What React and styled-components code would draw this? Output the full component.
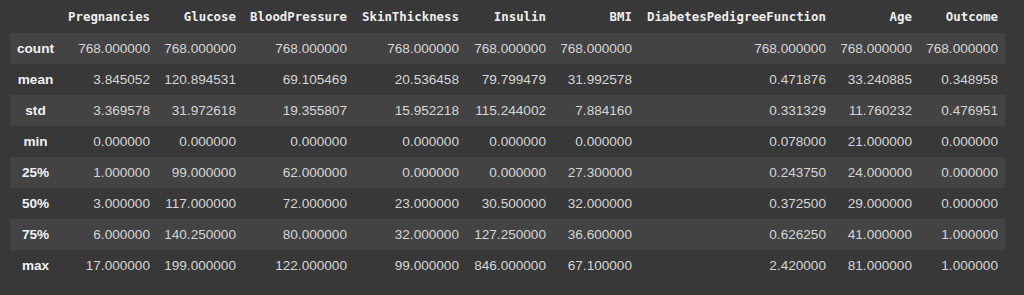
import React from "react"
import styled, { createGlobalStyle } from "styled-components"

const GlobalStyle = createGlobalStyle`
  html, body {
    margin: 0;
    padding: 0;
    background: #383838;
  }
`

const Wrapper = styled.div`
  padding: 0 0 0 10px;
  width: 1024px;
  height: 295px;
  box-sizing: border-box;
  background: #383838;
`

const Table = styled.table`
  border-collapse: collapse;
  border-spacing: 0;
  table-layout: fixed;
  width: 995px;
  font-family: "Liberation Sans", Arial, sans-serif;
  font-size: 13.6px;
  color: #d5d5d5;
`

const Col = styled.col`
  width: ${(p) => p.$w}px;
`

const HeadRow = styled.tr`
  height: 33px;
`

const HeadCell = styled.th`
  padding: 0 7px;
  text-align: right;
  white-space: nowrap;
  font-family: "DejaVu Sans Mono", "Liberation Mono", monospace;
  font-weight: bold;
  font-size: 12.4px;
  color: #eeeeee;
`

const Row = styled.tr`
  height: 31px;
  background: ${(p) => (p.$odd ? "#434343" : "transparent")};
`

const IndexCell = styled.th`
  padding: 0 7px;
  text-align: center;
  white-space: nowrap;
  font-weight: bold;
  color: #f2f2f2;
`

const Cell = styled.td`
  padding: 0 7px;
  text-align: right;
  white-space: nowrap;
`

const columns = [
  { name: "Pregnancies", w: 96 },
  { name: "Glucose", w: 86 },
  { name: "BloodPressure", w: 111 },
  { name: "SkinThickness", w: 112 },
  { name: "Insulin", w: 87 },
  { name: "BMI", w: 86 },
  { name: "DiabetesPedigreeFunction", w: 194 },
  { name: "Age", w: 86 },
  { name: "Outcome", w: 86 },
]

const rows = [
  ["count", "768.000000", "768.000000", "768.000000", "768.000000", "768.000000", "768.000000", "768.000000", "768.000000", "768.000000"],
  ["mean", "3.845052", "120.894531", "69.105469", "20.536458", "79.799479", "31.992578", "0.471876", "33.240885", "0.348958"],
  ["std", "3.369578", "31.972618", "19.355807", "15.952218", "115.244002", "7.884160", "0.331329", "11.760232", "0.476951"],
  ["min", "0.000000", "0.000000", "0.000000", "0.000000", "0.000000", "0.000000", "0.078000", "21.000000", "0.000000"],
  ["25%", "1.000000", "99.000000", "62.000000", "0.000000", "0.000000", "27.300000", "0.243750", "24.000000", "0.000000"],
  ["50%", "3.000000", "117.000000", "72.000000", "23.000000", "30.500000", "32.000000", "0.372500", "29.000000", "0.000000"],
  ["75%", "6.000000", "140.250000", "80.000000", "32.000000", "127.250000", "36.600000", "0.626250", "41.000000", "1.000000"],
  ["max", "17.000000", "199.000000", "122.000000", "99.000000", "846.000000", "67.100000", "2.420000", "81.000000", "1.000000"],
]

function App() {
  return (
    <Wrapper>
      <GlobalStyle />
      <Table>
        <colgroup>
          <Col $w={51} />
          {columns.map((c) => (
            <Col key={c.name} $w={c.w} />
          ))}
        </colgroup>
        <thead>
          <HeadRow>
            <HeadCell></HeadCell>
            {columns.map((c) => (
              <HeadCell key={c.name}>{c.name}</HeadCell>
            ))}
          </HeadRow>
        </thead>
        <tbody>
          {rows.map((r, i) => (
            <Row key={r[0]} $odd={i % 2 === 0}>
              <IndexCell>{r[0]}</IndexCell>
              {r.slice(1).map((v, j) => (
                <Cell key={j}>{v}</Cell>
              ))}
            </Row>
          ))}
        </tbody>
      </Table>
    </Wrapper>
  )
}

export default App
